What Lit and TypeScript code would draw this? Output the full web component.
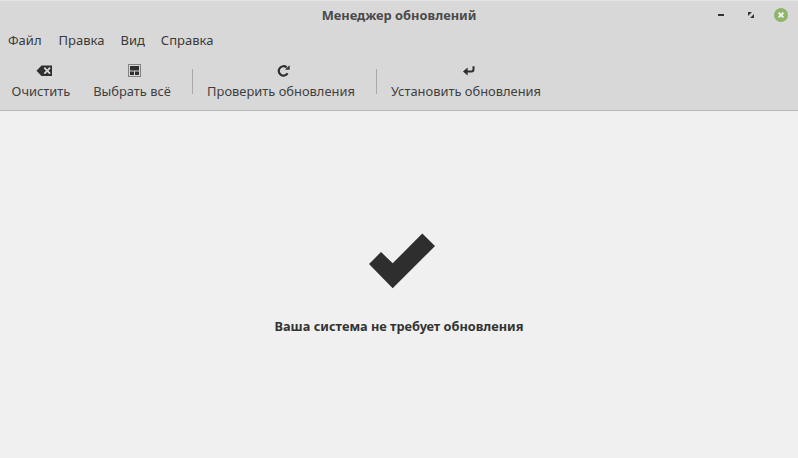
import { LitElement, html, css } from "lit";
import { customElement } from "lit/decorators.js";

@customElement("app-root")
export class AppRoot extends LitElement {
  static styles = css`
    :host {
      display: flex;
      flex-direction: column;
      width: 798px;
      height: 458px;
      overflow: hidden;
      background: #f0f0f0;
      color: #3a3a3a;
      font-family: "Noto Sans", sans-serif;
      font-size: 13px;
    }
    .header {
      background: #d8d8d8;
      border-bottom: 1px solid #b8b8b8;
      height: 110px;
      flex: none;
      display: flex;
      flex-direction: column;
    }
    .titlebar {
      height: 28px;
      flex: none;
      display: grid;
      grid-template-columns: 1fr auto 1fr;
      align-items: center;
      border-top: 1px solid #e4e4e4;
      box-sizing: border-box;
    }
    .title {
      grid-column: 2;
      font-weight: 700;
      font-size: 12.85px;
      color: #4a4a4a;
      line-height: 26px;
    }
    .controls {
      grid-column: 3;
      justify-self: end;
      display: flex;
      align-items: center;
      padding-right: 10px;
    }
    .controls svg { display: block; }
    .controls .min { margin-right: 22px; }
    .controls .max { margin-right: 19px; }
    .menu {
      height: 24px;
      flex: none;
      display: flex;
      align-items: center;
      gap: 16px;
      padding-left: 8px;
    }
    .menu .first { margin-right: 1px; }
    .toolbar {
      flex: 1;
      display: flex;
      align-items: flex-start;
      padding-left: 12px;
    }
    .tool {
      display: flex;
      flex-direction: column;
      align-items: center;
      padding-top: 11px;
      gap: 3px;
      color: #3f3f3f;
      flex: none;
    }
    .tool svg { display: block; width: 16px; height: 16px; margin-left: 6px; }
    .tool span { line-height: 18px; white-space: nowrap; font-size: 12.9px; }
    .t1 { width: 58px; margin-right: 23px; }
    .t2 { width: 78px; margin-right: 21px; }
    .t3 { width: 148px; margin-right: 21px; }
    .t4 { width: 150px; }
    .sep {
      width: 1px;
      height: 25px;
      margin: 17px 14px 0 0;
      background: #a9a9a9;
      flex: none;
    }
    .body {
      flex: 1;
      display: flex;
      flex-direction: column;
      align-items: center;
      padding-top: 122px;
    }
    .body svg { display: block; margin-left: 5px; }
    .msg {
      margin-top: 28px;
      font-weight: 700;
      font-size: 12.76px;
      line-height: 18px;
      color: #333;
    }
  `;

  render() {
    return html`
      <div class="header">
        <div class="titlebar">
          <div class="title">Менеджер обновлений</div>
          <div class="controls">
            <svg class="min" width="8" height="8" viewBox="0 0 8 8"><rect x="1" y="3" width="6" height="2" fill="#333"/></svg>
            <svg class="max" width="8" height="8" viewBox="0 0 8 8"><path d="M1 1H5L1 5Z M7 7H3L7 3Z" fill="#333"/></svg>
            <svg width="14" height="14" viewBox="0 0 14 14"><circle cx="7" cy="7" r="7" fill="#8fb56b"/><path d="M4.6 4.6 9.4 9.4M9.4 4.6 4.6 9.4" stroke="#f2f5ec" stroke-width="2"/></svg>
          </div>
        </div>
        <div class="menu">
          <span class="first">Файл</span><span>Правка</span><span>Вид</span><span>Справка</span>
        </div>
        <div class="toolbar">
          <div class="tool t1">
            <svg viewBox="0 0 16 16"><path fill-rule="evenodd" fill="#2f2f2f" d="M5.5 2.5H16V13H5.5L0.5 7.7Z M7.7 5.3 10 7.7 7.7 9.9 9 11.2 11.2 9 13.4 11.2 14.7 9.9 12.5 7.7 14.7 5.3 13.4 4 11.2 6.4 9 4Z"/></svg>
            <span>Очистить</span>
          </div>
          <div class="tool t2">
            <svg viewBox="0 0 16 16">
              <rect x="1.5" y="1.5" width="12" height="12" fill="none" stroke="#2f2f2f" stroke-dasharray="1 1"/>
              <path fill="#2f2f2f" d="M3 3H12V7.5H3ZM3 8.5H7V12H3ZM8 8.5H12V12H8Z"/>
            </svg>
            <span>Выбрать всё</span>
          </div>
          <div class="sep"></div>
          <div class="tool t3">
            <svg viewBox="0 0 16 16"><path fill="none" stroke="#2f2f2f" stroke-width="2.2" d="M11.6 10.2A4.7 4.7 0 1 1 10.6 4.4"/><path fill="#2f2f2f" d="M9 6.8H13.6V2.2Z"/></svg>
            <span>Проверить обновления</span>
          </div>
          <div class="sep"></div>
          <div class="tool t4">
            <svg viewBox="0 0 16 16"><path fill="none" stroke="#2f2f2f" stroke-width="2" d="M12.5 3.2V6.5A2 2 0 0 1 10.5 8.5H5"/><path fill="#2f2f2f" d="M6.6 4.4V12.6L2 8.5Z"/></svg>
            <span>Установить обновления</span>
          </div>
        </div>
      </div>
      <div class="body">
        <svg width="66" height="56" viewBox="0 0 66 56"><path fill="#2e2e2e" d="M53.3 0.5 66 13 23.7 55.3 0 31 12 19 23.7 30.3Z"/></svg>
        <div class="msg">Ваша система не требует обновления</div>
      </div>
    `;
  }
}
